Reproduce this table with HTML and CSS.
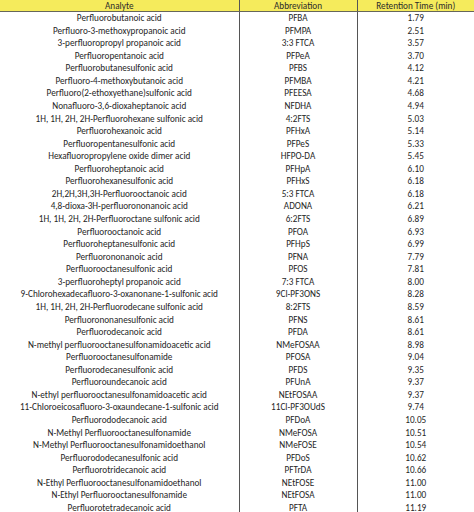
FILE: index.html
```html
<!DOCTYPE html>
<html lang="en">
<head>
<meta charset="utf-8">
<title>PFAS retention times</title>
<link rel="stylesheet" href="styles.css">
</head>
<body>
<table class="rt-table">
  <colgroup>
    <col class="col-analyte">
    <col class="col-abbr">
    <col class="col-rt">
  </colgroup>
  <thead>
    <tr class="head-row">
      <th>Analyte</th>
      <th>Abbreviation</th>
      <th>Retention Time (min)</th>
    </tr>
  </thead>
  <tbody>
    <tr><td>Perfluorobutanoic acid</td><td>PFBA</td><td>1.79</td></tr>
    <tr><td>Perfluoro-3-methoxypropanoic acid</td><td>PFMPA</td><td>2.51</td></tr>
    <tr><td>3-perfluoropropyl propanoic acid</td><td>3:3 FTCA</td><td>3.57</td></tr>
    <tr><td>Perfluoropentanoic acid</td><td>PFPeA</td><td>3.70</td></tr>
    <tr><td>Perfluorobutanesulfonic acid</td><td>PFBS</td><td>4.12</td></tr>
    <tr><td>Perfluoro-4-methoxybutanoic acid</td><td>PFMBA</td><td>4.21</td></tr>
    <tr><td>Perfluoro(2-ethoxyethane)sulfonic acid</td><td>PFEESA</td><td>4.68</td></tr>
    <tr><td>Nonafluoro-3,6-dioxaheptanoic acid</td><td>NFDHA</td><td>4.94</td></tr>
    <tr><td>1H, 1H, 2H, 2H-Perfluorohexane sulfonic acid</td><td>4:2FTS</td><td>5.03</td></tr>
    <tr><td>Perfluorohexanoic acid</td><td>PFHxA</td><td>5.14</td></tr>
    <tr><td>Perfluoropentanesulfonic acid</td><td>PFPeS</td><td>5.33</td></tr>
    <tr><td>Hexafluoropropylene oxide dimer acid</td><td>HFPO-DA</td><td>5.45</td></tr>
    <tr><td>Perfluoroheptanoic acid</td><td>PFHpA</td><td>6.10</td></tr>
    <tr><td>Perfluorohexanesulfonic acid</td><td>PFHxS</td><td>6.18</td></tr>
    <tr><td>2H,2H,3H,3H-Perfluorooctanoic acid</td><td>5:3 FTCA</td><td>6.18</td></tr>
    <tr><td>4,8-dioxa-3H-perfluorononanoic acid</td><td>ADONA</td><td>6.21</td></tr>
    <tr><td>1H, 1H, 2H, 2H-Perfluoroctane sulfonic acid</td><td>6:2FTS</td><td>6.89</td></tr>
    <tr><td>Perfluorooctanoic acid</td><td>PFOA</td><td>6.93</td></tr>
    <tr><td>Perfluoroheptanesulfonic acid</td><td>PFHpS</td><td>6.99</td></tr>
    <tr><td>Perfluorononanoic acid</td><td>PFNA</td><td>7.79</td></tr>
    <tr><td>Perfluorooctanesulfonic acid</td><td>PFOS</td><td>7.81</td></tr>
    <tr><td>3-perfluoroheptyl propanoic acid</td><td>7:3 FTCA</td><td>8.00</td></tr>
    <tr><td>9-Chlorohexadecafluoro-3-oxanonane-1-sulfonic acid</td><td>9Cl-PF3ONS</td><td>8.28</td></tr>
    <tr><td>1H, 1H, 2H, 2H-Perfluorodecane sulfonic acid</td><td>8:2FTS</td><td>8.59</td></tr>
    <tr><td>Perfluorononanesulfonic acid</td><td>PFNS</td><td>8.61</td></tr>
    <tr><td>Perfluorodecanoic acid</td><td>PFDA</td><td>8.61</td></tr>
    <tr><td>N-methyl perfluorooctanesulfonamidoacetic acid</td><td>NMeFOSAA</td><td>8.98</td></tr>
    <tr><td>Perfluorooctanesulfonamide</td><td>PFOSA</td><td>9.04</td></tr>
    <tr><td>Perfluorodecanesulfonic acid</td><td>PFDS</td><td>9.35</td></tr>
    <tr><td>Perfluoroundecanoic acid</td><td>PFUnA</td><td>9.37</td></tr>
    <tr><td>N-ethyl perfluorooctanesulfonamidoacetic acid</td><td>NEtFOSAA</td><td>9.37</td></tr>
    <tr><td>11-Chloroeicosafluoro-3-oxaundecane-1-sulfonic acid</td><td>11Cl-PF3OUdS</td><td>9.74</td></tr>
    <tr><td>Perfluorododecanoic acid</td><td>PFDoA</td><td>10.05</td></tr>
    <tr><td>N-Methyl Perfluorooctanesulfonamide</td><td>NMeFOSA</td><td>10.51</td></tr>
    <tr><td>N-Methyl Perfluorooctanesulfonamidoethanol</td><td>NMeFOSE</td><td>10.54</td></tr>
    <tr><td>Perfluorododecanesulfonic acid</td><td>PFDoS</td><td>10.62</td></tr>
    <tr><td>Perfluorotridecanoic acid</td><td>PFTrDA</td><td>10.66</td></tr>
    <tr><td>N-Ethyl Perfluorooctanesulfonamidoethanol</td><td>NEtFOSE</td><td>11.00</td></tr>
    <tr><td>N-Ethyl Perfluorooctanesulfonamide</td><td>NEtFOSA</td><td>11.00</td></tr>
    <tr><td>Perfluorotetradecanoic acid</td><td>PFTA</td><td>11.19</td></tr>
  </tbody>
</table>
</body>
</html>
```

FILE: styles.css
```css
html, body {
  margin: 0;
  padding: 0;
  background: #ffffff;
}

body {
  width: 474px;
  height: 512px;
  overflow: hidden;
  font-family: Carlito, Lato, "Liberation Sans", sans-serif;
  font-size: 9.2px;
  color: #262626;
}

.rt-table {
  width: 474px;
  border-collapse: collapse;
  table-layout: fixed;
}

.col-analyte { width: 239px; }
.col-abbr { width: 118px; }
.col-rt { width: 117px; }

.rt-table th,
.rt-table td {
  padding: 0;
  text-align: center;
  white-space: nowrap;
  overflow: hidden;
  font-weight: normal;
}

.rt-table th:nth-child(-n+2),
.rt-table td:nth-child(-n+2) {
  border-right: 1px solid #555555;
}

.head-row th {
  height: 11px;
  line-height: 11px;
  background: #f5eb5c;
  border-bottom: 1px solid #66665a;
  color: #2a2a2a;
}

.rt-table tbody td {
  height: 12.56px;
  line-height: 12.56px;
}
```
